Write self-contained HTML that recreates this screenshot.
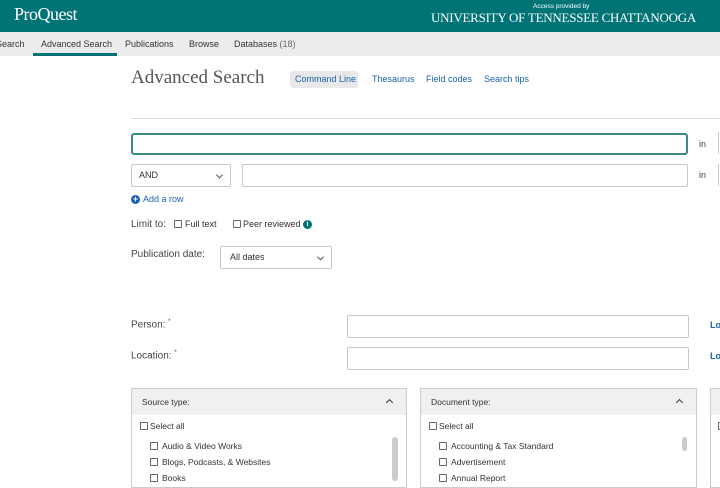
<!DOCTYPE html>
<html><head><meta charset="utf-8"><style>
*{margin:0;padding:0;box-sizing:border-box}
body{width:720px;height:480px;overflow:hidden;background:#fff;font-family:"Liberation Sans",sans-serif;position:relative;color:#333}
.a{position:absolute;white-space:nowrap}
.hdr{left:0;top:0;width:720px;height:32px;background:#007377}
.nav{left:0;top:32px;width:720px;height:24px;background:#ececec}
.nt{font-size:9px;color:#333;top:39px}
.lnk{color:#1a62b0;font-size:9px}
.box{border:1px solid #c8c8c8;border-radius:2px;background:#fff}
.cb{width:8px;height:8px;border:1px solid #666;border-radius:1px;background:#fff}
.lbl{font-size:10px;color:#444}
.sel::after{content:"";position:absolute;right:8px;top:50%;width:4px;height:4px;border-right:1px solid #555;border-bottom:1px solid #555;transform:translateY(-70%) rotate(45deg)}
.panel{border:1px solid #ccc;top:388px;height:100px;background:#fff}
.ph{position:absolute;left:0;top:0;right:0;height:26px;background:#f0f0f0}
.it{font-size:8.5px;color:#333}
</style></head><body>
<div class="a hdr"></div>
<div class="a" style="left:14px;top:4px;font-family:'Liberation Serif',serif;font-size:18px;color:#fff;letter-spacing:-0.5px">ProQuest</div>
<div class="a" style="left:533px;top:3px;font-size:6.5px;color:#fff">Access provided by</div>
<div class="a" style="left:431px;top:10px;font-family:'Liberation Serif',serif;font-size:13px;color:#fff;letter-spacing:-0.25px">UNIVERSITY OF TENNESSEE CHATTANOOGA</div>
<div class="a nav"></div>
<div class="a nt" style="left:-4px">Search</div>
<div class="a nt" style="left:41px">Advanced Search</div>
<div class="a" style="left:33px;top:53px;width:84px;height:3px;background:#007377"></div>
<div class="a nt" style="left:125px">Publications</div>
<div class="a nt" style="left:189px">Browse</div>
<div class="a nt" style="left:234px">Databases <span style="color:#666">(18)</span></div>

<div class="a" style="left:131px;top:67px;font-family:'Liberation Serif',serif;font-size:19px;color:#555">Advanced Search</div>
<div class="a" style="left:290px;top:71px;width:68px;height:17px;background:#e8e8e8;border-radius:3px"></div>
<div class="a lnk" style="left:295px;top:74px">Command Line</div>
<div class="a lnk" style="left:372px;top:74px">Thesaurus</div>
<div class="a lnk" style="left:426px;top:74px">Field codes</div>
<div class="a lnk" style="left:484px;top:74px">Search tips</div>
<div class="a" style="left:131px;top:118px;width:589px;height:1px;background:#ddd"></div>

<div class="a box" style="left:131px;top:133px;width:557px;height:22px;border:2px solid #3a8a8c;border-radius:3px"></div>
<div class="a lbl" style="left:699px;top:139px;font-size:9px">in</div>
<div class="a" style="left:718px;top:132px;width:4px;height:22px;border-left:1px solid #ccc"></div>
<div class="a box sel" style="left:131px;top:164px;width:100px;height:23px"></div>
<div class="a" style="left:139px;top:170px;font-size:9px;color:#333">AND</div>
<div class="a box" style="left:242px;top:164px;width:446px;height:23px"></div>
<div class="a lbl" style="left:699px;top:170px;font-size:9px">in</div>
<div class="a" style="left:718px;top:164px;width:4px;height:22px;border-left:1px solid #ccc"></div>
<div class="a" style="left:131px;top:195px;width:9px;height:9px;border-radius:50%;background:#1a62b0;color:#fff;font-size:9px;line-height:9px;text-align:center;font-weight:bold">+</div>
<div class="a lnk" style="left:143px;top:194px">Add a row</div>

<div class="a lbl" style="left:131px;top:219px">Limit to:</div>
<div class="a cb" style="left:174px;top:220px"></div>
<div class="a it" style="left:185px;top:219px;font-size:9px">Full text</div>
<div class="a cb" style="left:233px;top:220px"></div>
<div class="a it" style="left:243px;top:219px;font-size:9px">Peer reviewed</div>
<div class="a" style="left:303px;top:220px;width:9px;height:9px;border-radius:50%;background:#007377;color:#fff;font-size:7px;line-height:9px;text-align:center;font-weight:bold">i</div>

<div class="a lbl" style="left:131px;top:249px">Publication date:</div>
<div class="a box sel" style="left:220px;top:246px;width:112px;height:23px"></div>
<div class="a" style="left:230px;top:252px;font-size:9px;color:#333">All dates</div>

<div class="a lbl" style="left:131px;top:319px">Person: <sup style="font-size:6px">*</sup></div>
<div class="a box" style="left:347px;top:315px;width:342px;height:23px"></div>
<div class="a lnk" style="left:710px;top:320px;font-weight:bold">Lo</div>
<div class="a lbl" style="left:131px;top:350px">Location: <sup style="font-size:6px">*</sup></div>
<div class="a box" style="left:347px;top:347px;width:342px;height:23px"></div>
<div class="a lnk" style="left:710px;top:351px;font-weight:bold">Lo</div>

<div class="a panel" style="left:131px;width:276px">
 <div class="ph"></div>
 <div class="a it" style="left:10px;top:8px">Source type:</div>
 <div class="a" style="left:255px;top:11px;width:5px;height:5px;border-left:1.5px solid #333;border-top:1.5px solid #333;transform:rotate(45deg)"></div>
 <div class="a cb" style="left:8px;top:33px"></div><div class="a it" style="left:18px;top:32px">Select all</div>
 <div class="a cb" style="left:18px;top:53px"></div><div class="a it" style="left:30px;top:52px">Audio &amp; Video Works</div>
 <div class="a cb" style="left:18px;top:69px"></div><div class="a it" style="left:30px;top:68px">Blogs, Podcasts, &amp; Websites</div>
 <div class="a cb" style="left:18px;top:85px"></div><div class="a it" style="left:30px;top:84px">Books</div>
 <div class="a" style="left:260px;top:48px;width:6px;height:44px;background:#ccc;border-radius:3px"></div>
</div>
<div class="a panel" style="left:420px;width:277px">
 <div class="ph"></div>
 <div class="a it" style="left:10px;top:8px">Document type:</div>
 <div class="a" style="left:256px;top:11px;width:5px;height:5px;border-left:1.5px solid #333;border-top:1.5px solid #333;transform:rotate(45deg)"></div>
 <div class="a cb" style="left:8px;top:33px"></div><div class="a it" style="left:18px;top:32px">Select all</div>
 <div class="a cb" style="left:18px;top:53px"></div><div class="a it" style="left:30px;top:52px">Accounting &amp; Tax Standard</div>
 <div class="a cb" style="left:18px;top:69px"></div><div class="a it" style="left:30px;top:68px">Advertisement</div>
 <div class="a cb" style="left:18px;top:85px"></div><div class="a it" style="left:30px;top:84px">Annual Report</div>
 <div class="a" style="left:261px;top:48px;width:5px;height:14px;background:#ccc;border-radius:3px"></div>
</div>
<div class="a panel" style="left:710px;width:20px"><div class="ph"></div><div class="a cb" style="left:7px;top:33px"></div></div>
</body></html>
